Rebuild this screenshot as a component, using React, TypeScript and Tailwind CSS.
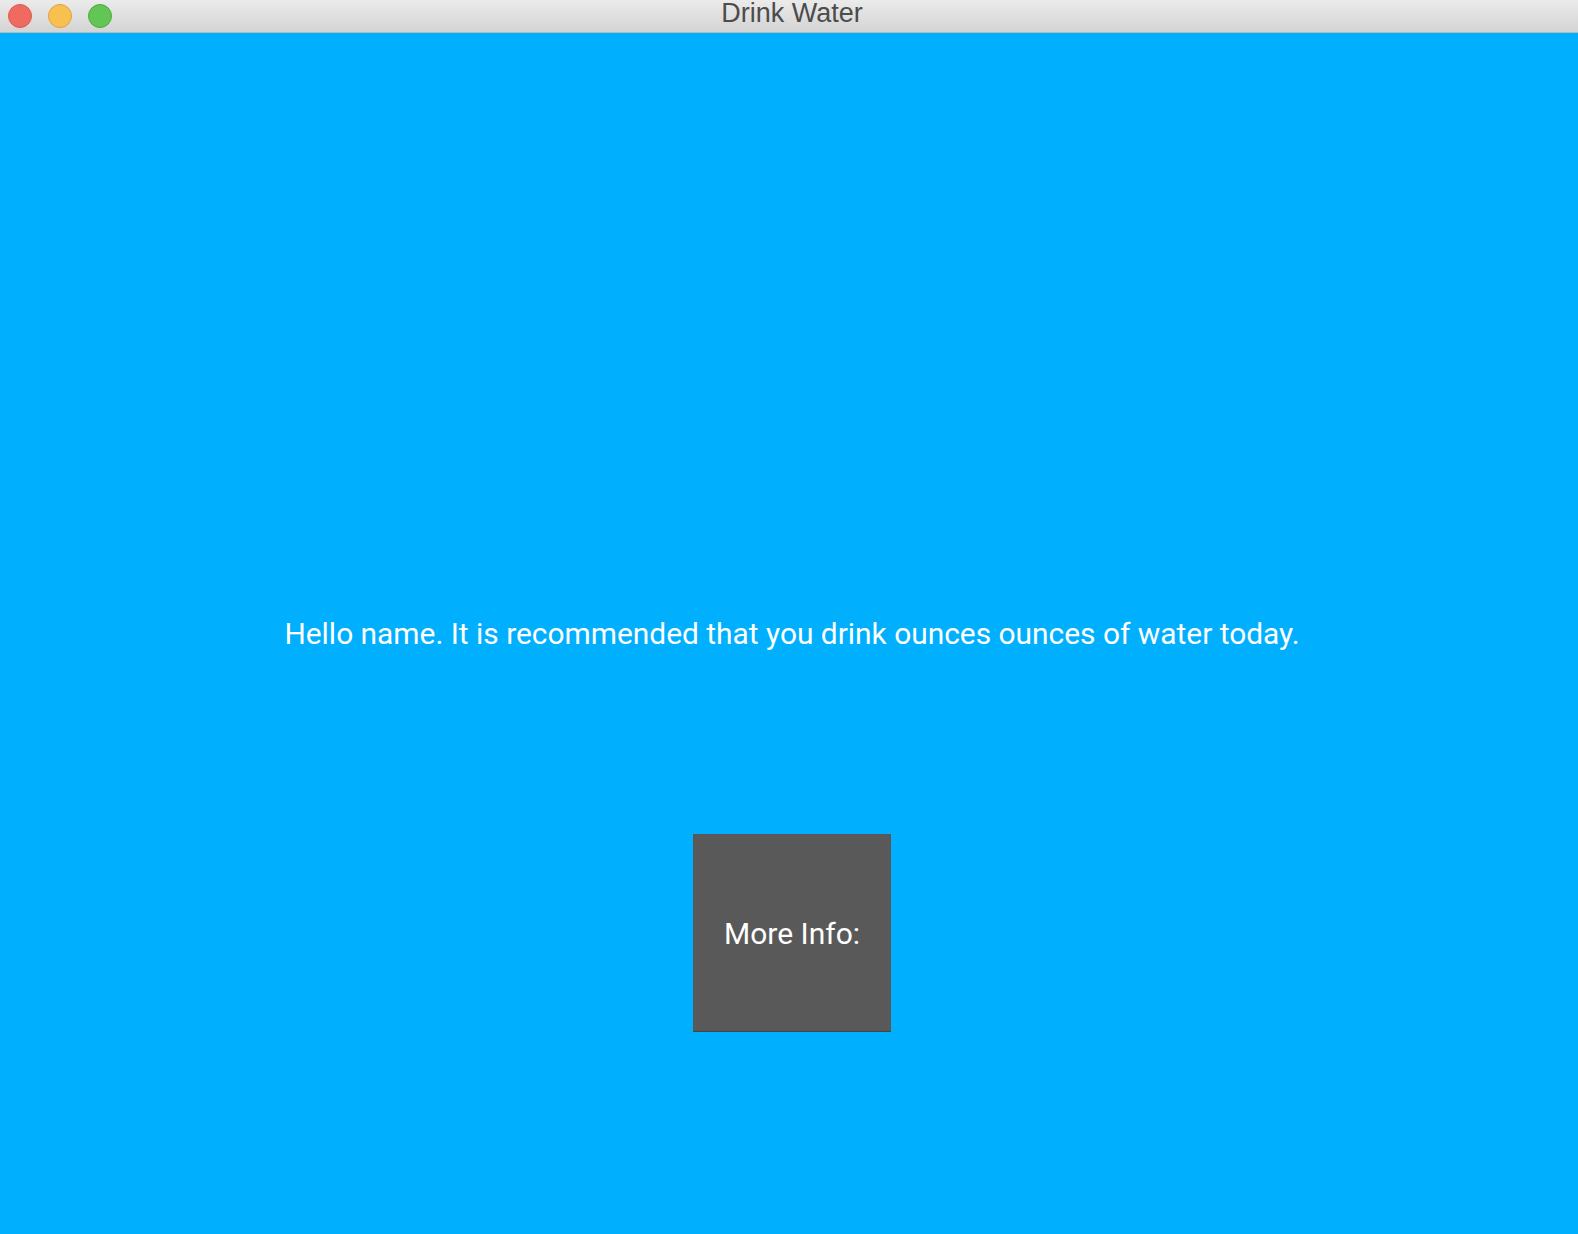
export default function App() {
  return (
    <div className="flex h-[1234px] w-full flex-col font-['Roboto',sans-serif]">
      {/* Title bar */}
      <div className="relative flex h-[33px] shrink-0 items-center border-b border-[#b9b9b9] bg-gradient-to-b from-[#ebebeb] to-[#d4d4d4]">
        <div className="flex items-center gap-4 pl-2">
          <span className="h-6 w-6 rounded-full border border-[#dc5a50] bg-[#ef6b60]" />
          <span className="h-6 w-6 rounded-full border border-[#dca23f] bg-[#f7c04f]" />
          <span className="h-6 w-6 rounded-full border border-[#4ea83f] bg-[#62c654]" />
        </div>
        <div className="absolute inset-0 flex items-center justify-center pb-[6px] pl-[6px] text-[27px] leading-none text-[#4c4c4c] font-['Liberation_Sans',sans-serif]">
          Drink Water
        </div>
      </div>

      {/* Content */}
      <main className="flex flex-1 flex-col items-center bg-[#00b0ff] pl-[6px] pt-[583px]">
        <p className="h-[36px] text-[29.9px] leading-[36px] text-white">
          Hello name. It is recommended that you drink ounces ounces of water today.
        </p>
        <button
          type="button"
          className="mt-[182px] flex h-[198px] w-[198px] items-center justify-center border-b border-[#454545] bg-[#595959] pt-[1px] text-[30px] text-white"
        >
          More Info:
        </button>
      </main>
    </div>
  );
}
